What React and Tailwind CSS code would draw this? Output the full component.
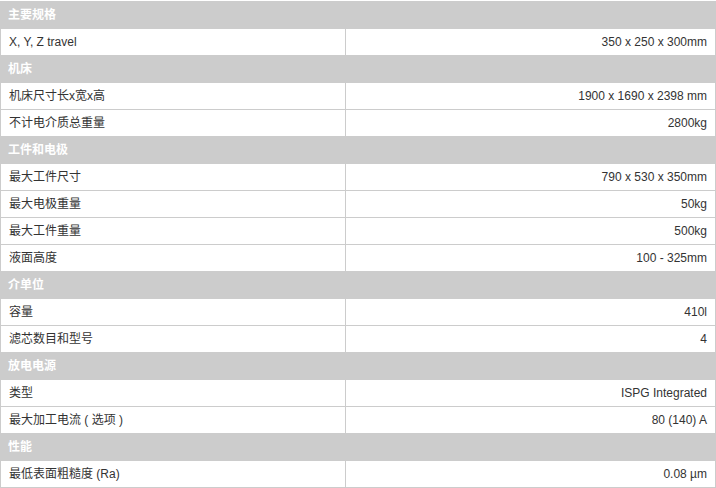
import React from 'react';

const sections = [
  { title: '主要规格', rows: [['X, Y, Z travel', '350 x 250 x 300mm']] },
  {
    title: '机床',
    rows: [
      ['机床尺寸长x宽x高', '1900 x 1690 x 2398 mm'],
      ['不计电介质总重量', '2800kg'],
    ],
  },
  {
    title: '工件和电极',
    rows: [
      ['最大工件尺寸', '790 x 530 x 350mm'],
      ['最大电极重量', '50kg'],
      ['最大工件重量', '500kg'],
      ['液面高度', '100 - 325mm'],
    ],
  },
  {
    title: '介单位',
    rows: [
      ['容量', '410l'],
      ['滤芯数目和型号', '4'],
    ],
  },
  {
    title: '放电电源',
    rows: [
      ['类型', 'ISPG Integrated'],
      ['最大加工电流 ( 选项 )', '80 (140) A'],
    ],
  },
  { title: '性能', rows: [['最低表面粗糙度 (Ra)', '0.08 µm']] },
];

export default function App() {
  return (
    <div
      className="w-[716px] h-[488px] bg-white pt-px text-[12px] text-[#333]"
      style={{ fontFamily: '"Liberation Sans", Arial, "Noto Sans CJK SC", sans-serif' }}
    >
      <div className="border-b border-[#cccccc]">
        {sections.map((section) => (
          <div key={section.title}>
            <div className="h-[28px] bg-[#cccccc] flex items-center px-2 font-bold text-white">
              {section.title}
            </div>
            {section.rows.map(([label, value], i) => (
              <div
                key={label}
                className={`flex border-x border-[#cccccc] ${i < section.rows.length - 1 ? 'h-[27px] border-b' : 'h-[26px]'}`}
              >
                <div className="w-[345px] border-r border-[#cccccc] flex items-center px-2">{label}</div>
                <div className="flex-1 flex items-center justify-end px-2">{value}</div>
              </div>
            ))}
          </div>
        ))}
      </div>
    </div>
  );
}
